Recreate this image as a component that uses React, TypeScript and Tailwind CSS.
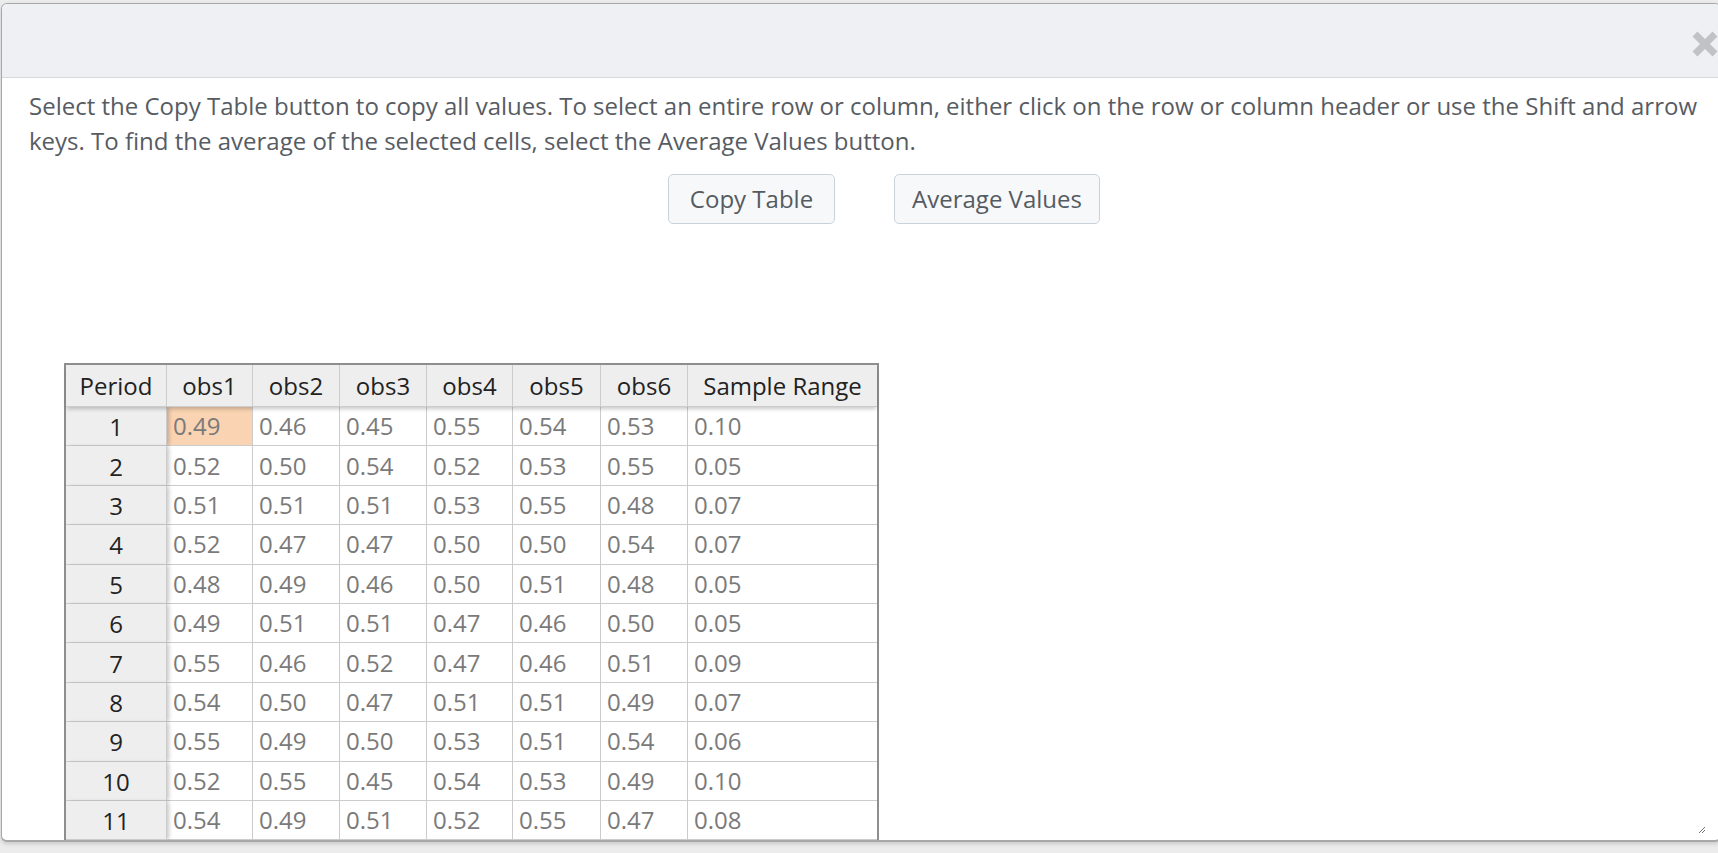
import React from "react";

const rows: string[][] = [
  ["0.49", "0.46", "0.45", "0.55", "0.54", "0.53", "0.10"],
  ["0.52", "0.50", "0.54", "0.52", "0.53", "0.55", "0.05"],
  ["0.51", "0.51", "0.51", "0.53", "0.55", "0.48", "0.07"],
  ["0.52", "0.47", "0.47", "0.50", "0.50", "0.54", "0.07"],
  ["0.48", "0.49", "0.46", "0.50", "0.51", "0.48", "0.05"],
  ["0.49", "0.51", "0.51", "0.47", "0.46", "0.50", "0.05"],
  ["0.55", "0.46", "0.52", "0.47", "0.46", "0.51", "0.09"],
  ["0.54", "0.50", "0.47", "0.51", "0.51", "0.49", "0.07"],
  ["0.55", "0.49", "0.50", "0.53", "0.51", "0.54", "0.06"],
  ["0.52", "0.55", "0.45", "0.54", "0.53", "0.49", "0.10"],
  ["0.54", "0.49", "0.51", "0.52", "0.55", "0.47", "0.08"],
];

const headers = ["obs1", "obs2", "obs3", "obs4", "obs5", "obs6", "Sample Range"];
// column widths taken from the screenshot
const widths = ["w-[86px]", "w-[87px]", "w-[87px]", "w-[86px]", "w-[88px]", "w-[87px]", "w-[189px]"];

function DataTable() {
  return (
    <div className="inline-block border-2 border-b-0 border-[#8e8e8e] text-[24px]">
      {/* header row */}
      <div className="relative z-20 flex shadow-[0_3px_4px_-1px_rgba(0,0,0,0.22)]">
        <div className="w-[101px] h-[42px] flex items-center justify-center bg-[#eeeeee] border-r border-b border-[#cccccc] text-[#222]">
          Period
        </div>
        {headers.map((h, i) => (
          <div
            key={h}
            className={`${widths[i]} h-[42px] flex items-center justify-center bg-[#eeeeee] border-r border-b border-[#cccccc] text-[#222] last:border-r-0`}
          >
            {h}
          </div>
        ))}
      </div>

      {/* body rows */}
      {rows.map((r, ri) => (
        <div key={ri} className="flex">
          <div className="relative z-10 w-[101px] h-[39.4px] flex items-center justify-center pt-[2px] bg-[#eeeeee] border-r border-b border-[#cccccc] text-[#222] shadow-[3px_0_4px_-1px_rgba(0,0,0,0.22)]">
            {ri + 1}
          </div>
          {r.map((v, ci) => (
            <div
              key={ci}
              className={`${widths[ci]} h-[39.4px] flex items-center pl-[6px] border-r border-b border-[#cccccc] text-[#7a7a7a] last:border-r-0 ${
                ri === 0 && ci === 0 ? "bg-[#f9d3b2]" : "bg-white"
              }`}
            >
              {v}
            </div>
          ))}
        </div>
      ))}
    </div>
  );
}

export default function App() {
  return (
    <div className="w-[1718px] h-[853px] overflow-hidden bg-[#ececec] font-['Open_Sans',sans-serif]">
      <div className="pt-[3px] pl-[1px]">
        <div className="w-[1720px] h-[839px] bg-white border border-[#a8a8a8] border-b-2 rounded-[6px] overflow-hidden flex flex-col shadow-[0_2px_4px_rgba(0,0,0,0.15)]">
          {/* title bar */}
          <div className="h-[74px] shrink-0 bg-[#eff0f4] border-b border-[#d5d8dd] flex justify-end items-start pt-[27px] pr-[1px]">
            <svg width="28" height="26" viewBox="0 0 28 26">
              <path d="M4 3 L24 23 M24 3 L4 23" stroke="#c1c2c5" strokeWidth="7" />
            </svg>
          </div>

          {/* body */}
          <div className="relative flex-1 overflow-hidden pl-[27px] pr-[8px] pt-[10px]">
            <p className="text-[24px] leading-[35px] text-[#575c63]">
              Select the Copy Table button to copy all values. To select an entire row or column, either click on the
              row or column header or use the Shift and arrow keys. To find the average of the selected cells, select
              the Average Values button.
            </p>

            <div className="mt-[16px] flex gap-[59px] pl-[639px]">
              <button className="w-[167px] h-[50px] rounded-[5px] border-[1.5px] border-[#c9d1d9] bg-[#f7f8fa] text-[24px] text-[#555b62]">
                Copy Table
              </button>
              <button className="w-[206px] h-[50px] rounded-[5px] border-[1.5px] border-[#c9d1d9] bg-[#f7f8fa] text-[24px] text-[#555b62]">
                Average Values
              </button>
            </div>

            <div className="mt-[139px] ml-[35px]">
              <DataTable />
            </div>

            {/* resize grip */}
            <svg className="absolute right-[14px] bottom-[6px]" width="8" height="8" viewBox="0 0 8 8">
              <path d="M7 1 L1 7 M7 4 L4 7" stroke="#777" strokeWidth="1" />
            </svg>
          </div>
        </div>
      </div>
    </div>
  );
}
